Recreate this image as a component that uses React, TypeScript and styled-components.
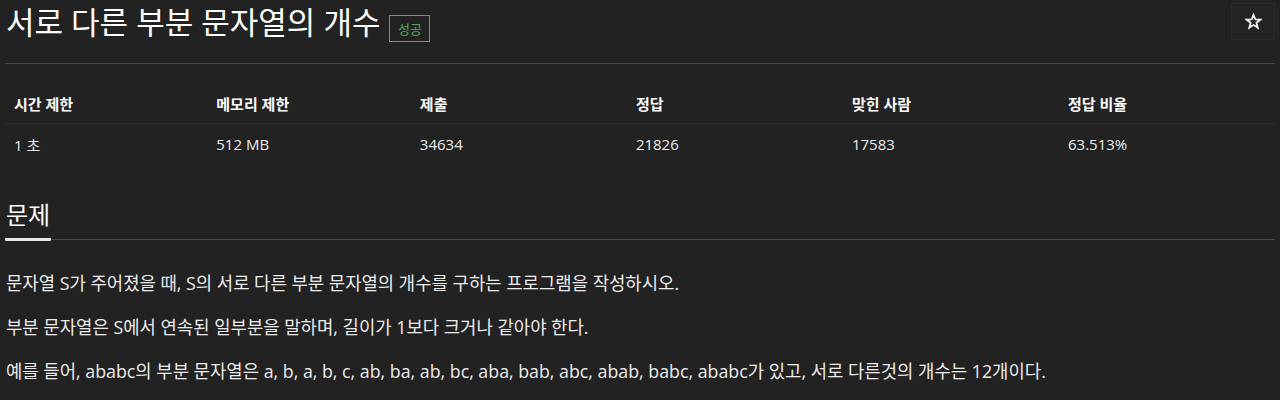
import React from "react";
import styled, { createGlobalStyle } from "styled-components";

const Global = createGlobalStyle`
  html, body { margin: 0; padding: 0; background: #222222; }
  body {
    font-family: "Open Sans", "Noto Sans CJK KR", sans-serif;
    color: #e8e8e8;
    -webkit-font-smoothing: antialiased;
  }
`;

const Page = styled.div`
  width: 1270px;
  padding: 0 5px;
  height: 400px;
  overflow: hidden;
`;

const TitleBar = styled.div`
  display: flex;
  justify-content: space-between;
  align-items: flex-start;
  height: 63px;
  border-bottom: 1px solid #444;
`;

const TitleGroup = styled.div`
  display: flex;
  align-items: center;
  gap: 9px;
  height: 44px;
  padding-left: 1px;
`;

const Title = styled.h1`
  margin: 0;
  font-size: 31px;
  font-weight: 400;
  color: #ffffff;
  line-height: 44px;
`;

const Label = styled.span`
  display: inline-flex;
  align-items: center;
  justify-content: center;
  width: 39px;
  height: 25px;
  margin-top: 13px;
  border: 1px solid #4caf50;
  color: #4caf50;
  font-size: 13px;
`;

const StarButton = styled.button`
  margin-top: 3px;
  width: 44px;
  height: 37px;
  background: #232323;
  border: 1px solid #2b2b2b;
  display: flex;
  align-items: center;
  justify-content: center;
  padding: 0;
`;

const Table = styled.table`
  width: 100%;
  margin-top: 20px;
  border-collapse: collapse;
  font-size: 15px;
`;

const Th = styled.th<{ $w: number }>`
  width: ${(p) => p.$w}px;
  text-align: left;
  padding: 0 9px;
  height: 39px;
  font-weight: 700;
  color: #ffffff;
  border-bottom: 1px solid #2c2c2c;
`;

const Td = styled.td`
  padding: 0 9px;
  height: 40px;
  color: #ececec;
`;

const Section = styled.section`
  margin-top: 28px;
`;

const SectionHead = styled.div`
  display: flex;
  border-bottom: 1px solid #4a4a4a;
`;

const SectionTitle = styled.h2`
  margin: 0 0 -2px 0;
  padding: 0 1px;
  font-size: 24px;
  font-weight: 400;
  color: #ffffff;
  line-height: 46px;
  border-bottom: 3px solid #e8e8e8;
  border-radius: 1px;
`;

const Para = styled.p`
  margin: 0 0 16px 0;
  font-size: 17.8px;
  line-height: 28px;
  color: #ececec;
  padding-left: 1px;
`;

const Body = styled.div`
  padding-top: 29px;
`;

const cols = [
  { h: "시간 제한", v: "1 초", w: 204 },
  { h: "메모리 제한", v: "512 MB", w: 204 },
  { h: "제출", v: "34634", w: 216 },
  { h: "정답", v: "21826", w: 216 },
  { h: "맞힌 사람", v: "17583", w: 216 },
  { h: "정답 비율", v: "63.513%", w: 214 },
];

function StarIcon() {
  return (
    <svg width="17" height="17" viewBox="0 0 24 24" fill="none" stroke="#ffffff" strokeWidth="2.4" strokeLinejoin="miter">
      <polygon points="12,2.5 14.6,9.2 21.6,9.4 16.1,13.8 18,20.8 12,16.8 6,20.8 7.9,13.8 2.4,9.4 9.4,9.2" />
    </svg>
  );
}

export default function App() {
  return (
    <>
      <Global />
      <Page>
        <TitleBar>
          <TitleGroup>
            <Title>서로 다른 부분 문자열의 개수</Title>
            <Label>성공</Label>
          </TitleGroup>
          <StarButton aria-label="star">
            <StarIcon />
          </StarButton>
        </TitleBar>
        <Table>
          <thead>
            <tr>
              {cols.map((c) => (
                <Th key={c.h} $w={c.w}>
                  {c.h}
                </Th>
              ))}
            </tr>
          </thead>
          <tbody>
            <tr>
              {cols.map((c) => (
                <Td key={c.h}>{c.v}</Td>
              ))}
            </tr>
          </tbody>
        </Table>
        <Section>
          <SectionHead>
            <SectionTitle>문제</SectionTitle>
          </SectionHead>
          <Body>
            <Para>문자열 S가 주어졌을 때, S의 서로 다른 부분 문자열의 개수를 구하는 프로그램을 작성하시오.</Para>
            <Para>부분 문자열은 S에서 연속된 일부분을 말하며, 길이가 1보다 크거나 같아야 한다.</Para>
            <Para>
              예를 들어, ababc의 부분 문자열은 a, b, a, b, c, ab, ba, ab, bc, aba, bab, abc, abab, babc, ababc가 있고, 서로
              다른것의 개수는 12개이다.
            </Para>
          </Body>
        </Section>
      </Page>
    </>
  );
}
